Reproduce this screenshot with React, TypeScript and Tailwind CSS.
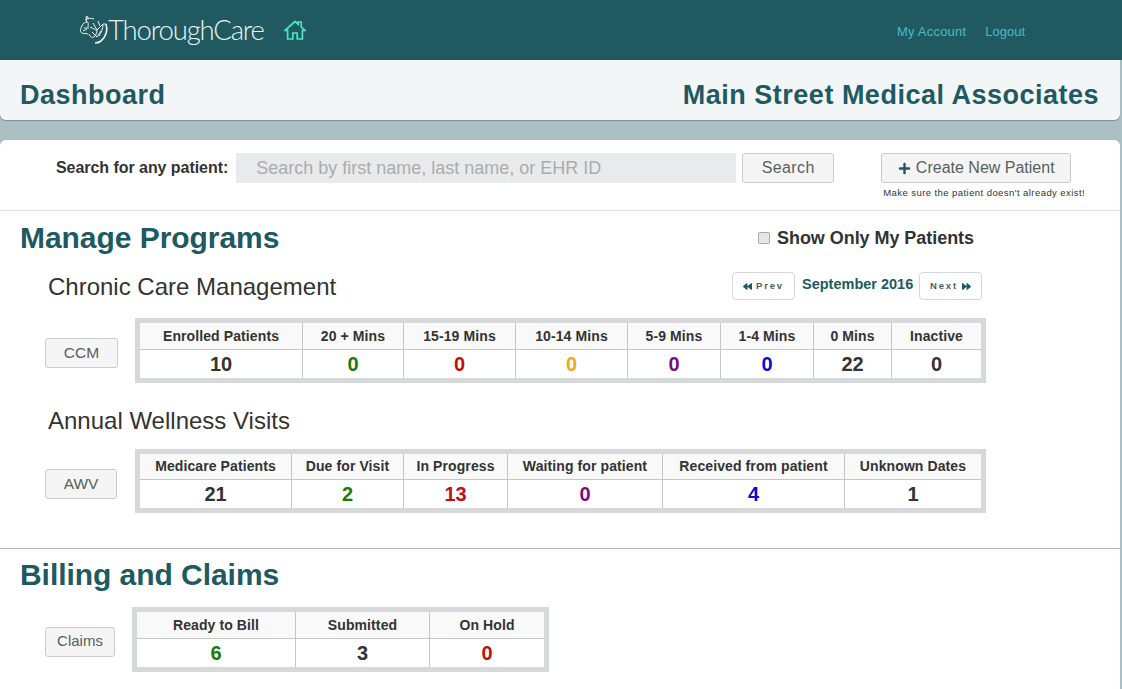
// ThoroughCare dashboard: programs overview with count tables
import { FaBackward, FaForward, FaPlus } from 'react-icons/fa';

const GREEN = 'text-[#1a7a0c]';
const RED = 'text-[#c01010]';
const ORANGE = 'text-[#f5a623]';
const PURPLE = 'text-[#770f80]';
const BLUE = 'text-[#0a0ad0]';
const DARK = 'text-[#333333]';

type Col = { label: string; value: number; width: number; color: string };

const ccm: Col[] = [
  { label: 'Enrolled Patients', value: 10, width: 163, color: DARK },
  { label: '20 + Mins', value: 0, width: 101, color: GREEN },
  { label: '15-19 Mins', value: 0, width: 112, color: RED },
  { label: '10-14 Mins', value: 0, width: 112, color: ORANGE },
  { label: '5-9 Mins', value: 0, width: 93, color: PURPLE },
  { label: '1-4 Mins', value: 0, width: 93, color: BLUE },
  { label: '0 Mins', value: 22, width: 78, color: DARK },
  { label: 'Inactive', value: 0, width: 89, color: DARK },
];

const awv: Col[] = [
  { label: 'Medicare Patients', value: 21, width: 152, color: DARK },
  { label: 'Due for Visit', value: 2, width: 112, color: GREEN },
  { label: 'In Progress', value: 13, width: 104, color: RED },
  { label: 'Waiting for patient', value: 0, width: 155, color: PURPLE },
  { label: 'Received from patient', value: 4, width: 182, color: BLUE },
  { label: 'Unknown Dates', value: 1, width: 136, color: DARK },
];

const claims: Col[] = [
  { label: 'Ready to Bill', value: 6, width: 159, color: GREEN },
  { label: 'Submitted', value: 3, width: 134, color: DARK },
  { label: 'On Hold', value: 0, width: 114, color: RED },
];

function CountTable({ cols, headClass = 'h-[27px]' }: { cols: Col[]; headClass?: string }) {
  return (
    <div className="border-[5px] border-[#d6d8d9] bg-white">
      <div className={`flex border-b border-[#c4c6c7] bg-[#f9f9f9] ${headClass}`}>
        {cols.map((c, i) => (
          <div
            key={c.label}
            style={{ width: c.width }}
            className={`flex items-center justify-center text-[14px] font-bold tracking-[0.1px] text-[#333333] ${
              i < cols.length - 1 ? 'border-r border-[#c4c6c7]' : ''
            }`}
          >
            {c.label}
          </div>
        ))}
      </div>
      <div className="flex h-[28px]">
        {cols.map((c, i) => (
          <div
            key={c.label}
            style={{ width: c.width }}
            className={`flex items-center justify-center text-[20px] font-bold ${c.color} ${
              i < cols.length - 1 ? 'border-r border-[#c4c6c7]' : ''
            }`}
          >
            {c.value}
          </div>
        ))}
      </div>
    </div>
  );
}

function GrayButton({ className, children }: { className: string; children: React.ReactNode }) {
  return (
    <button
      className={`flex h-[30px] items-center justify-center rounded-[3px] border border-[#c9cccc] bg-[#f5f5f5] text-[#56605f] ${className}`}
    >
      {children}
    </button>
  );
}

function PagerButton({ children }: { children: React.ReactNode }) {
  return (
    <button className="flex h-[28px] w-[63px] items-center justify-center gap-[4px] rounded-[4px] border border-[#d4d7d7] bg-white text-[9.500px] font-bold tracking-[1.8px] text-[#4a5f5e]">
      {children}
    </button>
  );
}

function Logo() {
  return (
    <div className="flex items-center">
      <svg width="30" height="30" viewBox="0 0 30 30" fill="none" stroke="#e6f1f0" strokeWidth="1" className="mr-[-1px]">
        <path d="M27 9c2 6 0 13-5 17-2 1.500-4 2-6 2" strokeWidth="1.700" />
        <path d="M3 11c-2 3-2 6 0 7 2 1 4 0 6 1M3 11c1-3 3-4 5-4 2 0 1 3 1 5" />
        <path d="M8 2c-1 2-1 4 0 5M6 5c3-2 6-2 9-1M11 12c3 1 5 3 7 3l6-6 3 0M18 15c0 3-1 5-3 7-2 1-4 0-5-3" />
        <path d="M13 17l5 5 4-6M24 9c0 5-2 9-4 12M5 13h5M4 16l4-2M14 8l4 7M19 6l2 5" />
        <circle cx="8" cy="2.500" r="1.100" />
      </svg>
      <span className="font-['Lato',sans-serif] text-[27.500px] leading-none font-light tracking-[-1.150px] text-[#e9f4f3]">
        ThoroughCare
      </span>
    </div>
  );
}

function HomeIcon() {
  return (
    <svg width="22" height="20" viewBox="0 0 22 20" fill="none" stroke="#4fe3bf" strokeWidth="1.700" strokeLinejoin="miter">
      <path d="M1 10.500 11 1.500l3.200 2.900V2h3v5l3.800 3.500h-2.600V19h-5.200v-6H8.800v6H3.600v-8.500z" />
    </svg>
  );
}

export default function App() {
  return (
    <div className="h-[689px] w-[1122px] overflow-hidden bg-[#abc0c3] font-['Liberation_Sans',Arial,sans-serif] text-[#333333]">
      <header className="flex h-[60px] items-center bg-[#205a60] pl-[79px]">
        <Logo />
        <div className="ml-[20px]">
          <HomeIcon />
        </div>
        <nav className="ml-auto mr-[97px] mt-[3px] flex gap-[19px] text-[13px] text-[#46bcc8]">
          <span className="tracking-[0.2px]">My Account</span>
          <span>Logout</span>
        </nav>
      </header>

      <div className="flex h-[60px] w-[1120px] items-center justify-between rounded-b-[6px] bg-[#f3f6f7] pl-5 pr-[21px] pt-[11px] text-[#205a60] shadow-[0_1px_1px_rgba(0,0,0,0.25)]">
        <h1 className="text-[27px] font-bold tracking-[0.5px]">Dashboard</h1>
        <h2 className="text-[27px] font-bold tracking-[0.5px]">Main Street Medical Associates</h2>
      </div>

      <main className="mt-5 h-[549px] w-[1120px] rounded-t-[6px] bg-white">
        <div className="flex h-[71px] border-b border-[#dcdfdf] pt-[13px]">
          <label className="ml-[56px] mt-[3px] text-[16px] font-bold tracking-[-0.05px]">Search for any patient:</label>
          <div className="ml-2 flex h-[30px] w-[500px] items-center bg-[#e9eaeb] pl-[20px] text-[18px] text-[#a9acad]">
            Search by first name, last name, or EHR ID
          </div>
          <GrayButton className="ml-[6px] w-[92px] text-[16px] tracking-[0.4px]">Search</GrayButton>
          <div className="ml-[47px] flex w-[204px] flex-col">
            <GrayButton className="w-[190px] gap-[5px] text-[16px]">
              <FaPlus className="text-[13px] text-[#205a60]" />
              Create New Patient
            </GrayButton>
            <p className="mt-[3px] ml-[2px] text-[9.500px] tracking-[0.43px] whitespace-nowrap text-[#333333]">
              Make sure the patient doesn't already exist!
            </p>
          </div>
        </div>

        <div className="flex h-[54px] items-center pl-5">
          <h2 className="mt-[-2px] text-[30px] font-bold tracking-[-0.05px] text-[#205a60]">Manage Programs</h2>
          <div className="ml-auto mr-[146px] flex items-center gap-[7px]">
            <input type="checkbox" className="h-[12px] w-[12px] appearance-none rounded-[2px] border border-[#a9abab] bg-[#e6e6e6]" />
            <span className="text-[18px] font-bold tracking-[-0.05px]">Show Only My Patients</span>
          </div>
        </div>

        <div className="flex h-[53px] items-start pt-[7px] pl-[48px]">
          <h3 className="mt-[-1px] text-[24px] leading-[32px] text-[#333333]">Chronic Care Management</h3>
          <div className="ml-auto mr-[138px] flex items-start">
            <PagerButton>
              <FaBackward className="text-[9px] text-[#205a60]" />
              Prev
            </PagerButton>
            <span className="ml-[7px] mr-[5px] mt-[2px] w-[112px] text-[14.500px] font-bold whitespace-nowrap text-[#205a60]">
              September 2016
            </span>
            <PagerButton>
              Next
              <FaForward className="text-[9px] text-[#205a60]" />
            </PagerButton>
          </div>
        </div>

        <div className="flex items-center pl-[45px]">
          <GrayButton className="mt-[4px] w-[73px] text-[15.500px]">CCM</GrayButton>
          <div className="ml-[17px]">
            <CountTable cols={ccm} />
          </div>
        </div>

        <h3 className="mt-[22px] pl-[48px] text-[24px] leading-[32px]">Annual Wellness Visits</h3>

        <div className="mt-[12px] flex items-center pl-[45px]">
          <GrayButton className="mt-[5px] w-[72px] text-[15.500px]">AWV</GrayButton>
          <div className="ml-[18px]">
            <CountTable cols={awv} headClass="h-[26px]" />
          </div>
        </div>

        <div className="mt-[35px] border-t border-[#b5b8b8] pl-5 pt-[8px]">
          <h2 className="text-[30px] leading-[36px] font-bold tracking-[-0.05px] text-[#205a60]">Billing and Claims</h2>
        </div>

        <div className="mt-[14px] flex items-center pl-[45px]">
          <GrayButton className="mt-[4px] w-[70px] text-[15px]">Claims</GrayButton>
          <div className="ml-[17px]">
            <CountTable cols={claims} />
          </div>
        </div>
      </main>
    </div>
  );
}
